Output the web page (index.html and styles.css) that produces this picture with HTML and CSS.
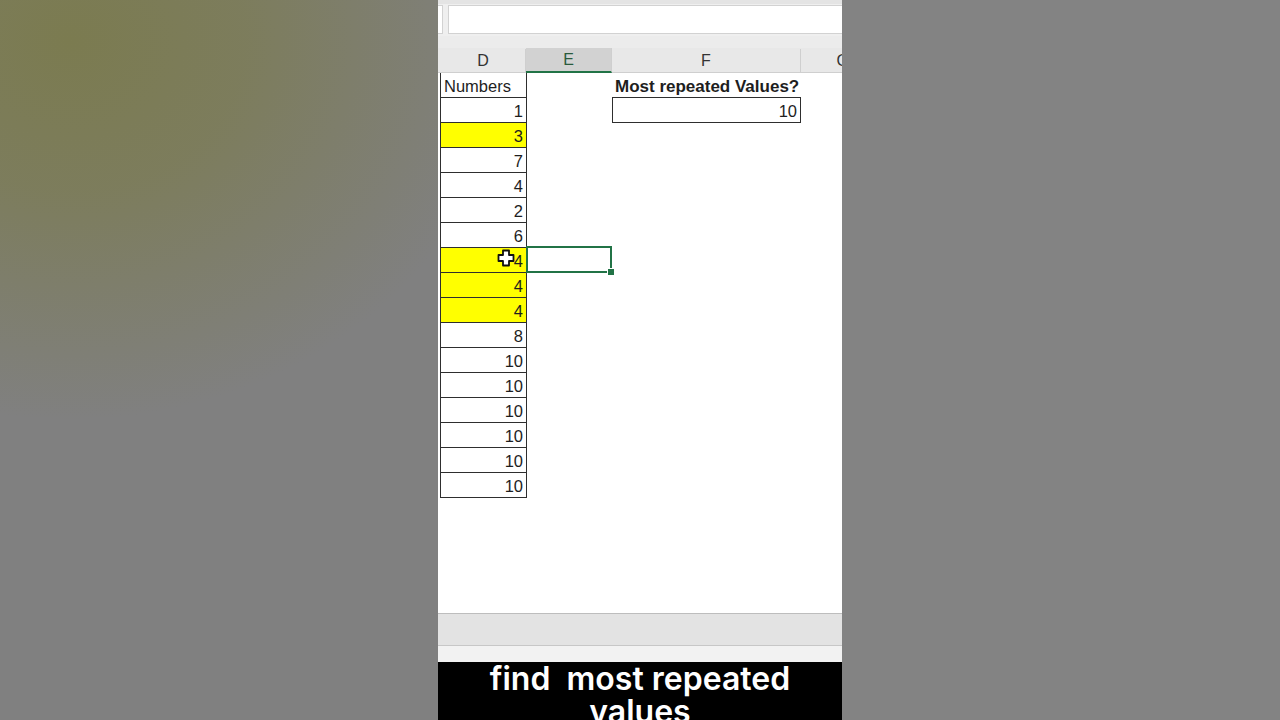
FILE: index.html
```html
<!DOCTYPE html>
<html>
<head>
<meta charset="utf-8">
<link rel="stylesheet" href="styles.css">
</head>
<body>
<div class="side-left"></div>
<main class="center">
  <div class="topstrip"></div>
  <div class="formula-row">
    <div class="namebox"></div>
    <div class="fx-input"></div>
  </div>
  <div class="ribbon-gap"></div>
  <div class="col-headers">
    <div class="rh"></div>
    <div class="ch">D</div>
    <div class="ch sel">E</div>
    <div class="ch">F</div>
    <div class="ch last">G</div>
  </div>
  <div class="sheet">
    <div class="grid">
      <div class="edge"></div><div class="d head">Numbers</div><div class="e"></div><div class="f title">Most repeated Values?</div><div class="g"></div>
      <div class="edge"></div><div class="d">1</div><div class="e"></div><div class="f boxed">10</div><div class="g"></div>
      <div class="edge"></div><div class="d hl">3</div><div class="e"></div><div class="f"></div><div class="g"></div>
      <div class="edge"></div><div class="d">7</div><div class="e"></div><div class="f"></div><div class="g"></div>
      <div class="edge"></div><div class="d">4</div><div class="e"></div><div class="f"></div><div class="g"></div>
      <div class="edge"></div><div class="d">2</div><div class="e"></div><div class="f"></div><div class="g"></div>
      <div class="edge"></div><div class="d">6</div><div class="e"></div><div class="f"></div><div class="g"></div>
      <div class="edge"></div><div class="d hl cursor-cell">4<svg class="cursor" width="18" height="18" viewBox="0 0 18 18"><path d="M6 1.5h6v4.5h4.5v6h-4.5v4.5h-6v-4.5h-4.5v-6h4.5z" fill="#fff" stroke="#111" stroke-width="1.8" stroke-linejoin="round"/></svg></div><div class="e active"><span class="handle"></span></div><div class="f"></div><div class="g"></div>
      <div class="edge"></div><div class="d hl">4</div><div class="e"></div><div class="f"></div><div class="g"></div>
      <div class="edge"></div><div class="d hl">4</div><div class="e"></div><div class="f"></div><div class="g"></div>
      <div class="edge"></div><div class="d">8</div><div class="e"></div><div class="f"></div><div class="g"></div>
      <div class="edge"></div><div class="d">10</div><div class="e"></div><div class="f"></div><div class="g"></div>
      <div class="edge"></div><div class="d">10</div><div class="e"></div><div class="f"></div><div class="g"></div>
      <div class="edge"></div><div class="d">10</div><div class="e"></div><div class="f"></div><div class="g"></div>
      <div class="edge"></div><div class="d">10</div><div class="e"></div><div class="f"></div><div class="g"></div>
      <div class="edge"></div><div class="d">10</div><div class="e"></div><div class="f"></div><div class="g"></div>
      <div class="edge"></div><div class="d">10</div><div class="e"></div><div class="f"></div><div class="g"></div>
    </div>
  </div>
  <div class="tabbar"></div>
  <div class="statusbar"></div>
  <div class="caption">find  most repeated
values</div>
</main>
<div class="side-right"></div>
</body>
</html>
```
FILE: styles.css
```css
html, body {
  margin: 0;
  padding: 0;
}
body {
  width: 1280px;
  height: 720px;
  overflow: hidden;
  display: flex;
  font-family: "Liberation Sans", Arial, sans-serif;
}
.side-left {
  width: 438px;
  flex: none;
  background:
    radial-gradient(ellipse 440px 380px at 70px 40px, rgba(123,123,80,1) 0%, rgba(124,124,86,0.85) 40%, rgba(128,128,128,0) 100%),
    #808080;
}
.side-right {
  flex: 1;
  background: #838383;
}
.center {
  width: 404px;
  flex: none;
  display: flex;
  flex-direction: column;
  background: #fff;
  overflow: hidden;
}
.topstrip {
  height: 4px;
  background: #e4e4e4;
  flex: none;
}
.formula-row {
  height: 32px;
  flex: none;
  display: flex;
  gap: 5px;
  background: #efefef;
  box-sizing: border-box;
  padding: 1px 0 2px 0;
}
.namebox {
  width: 4px;
  background: #fff;
  border: 1px solid #d2d2d2;
  border-left: none;
}
.fx-input {
  flex: 1;
  background: #fff;
  border: 1px solid #d2d2d2;
  border-right: none;
}
.ribbon-gap {
  height: 12px;
  flex: none;
  background: #ececec;
}
.col-headers {
  height: 25px;
  flex: none;
  display: grid;
  grid-template-columns: 3px 85px 86px 189px 1fr;
  background: #e8e8e8;
  border-bottom: 1px solid #cfcfcf;
  box-sizing: border-box;
  color: #333;
  font-size: 16px;
  padding-top: 1px;
}
.rh {
  background: #e8e8e8;
}
.ch {
  display: flex;
  align-items: center;
  justify-content: center;
  border-right: 1px solid #cfcfcf;
}
.ch.sel {
  background: #d2d2d2;
  border-bottom: 2px solid #217346;
  color: #2a5a3c;
  margin-bottom: -1px;
  margin-top: -1px;
}
.ch.last {
  border-right: none;
  justify-content: flex-end;
  overflow: hidden;
  margin-right: -7px;
}
.sheet {
  flex: 1;
  background: #fff;
}
.grid {
  display: grid;
  grid-template-columns: 3px 85px 86px 189px 1fr;
  grid-auto-rows: 25px;
  color: #1e1e1e;
  font-size: 16.5px;
}
.grid > div {
  box-sizing: border-box;
  display: flex;
  align-items: center;
  padding-top: 2px;
}
.d {
  justify-content: flex-end;
  padding-right: 3px;
  border-left: 1px solid #2e2e2e;
  border-right: 1px solid #2e2e2e;
  border-bottom: 1px solid #2e2e2e;
  margin-left: -1px;
  margin-right: -1px;
  position: relative;
}
.d.head {
  justify-content: flex-start;
  padding-left: 3px;
}
.d.hl {
  background: #ffff00;
}
.title {
  font-weight: bold;
  font-size: 17px;
  padding-left: 3px;
  white-space: nowrap;
}
.f.boxed {
  justify-content: flex-end;
  padding-right: 3px;
  border: 1px solid #2e2e2e;
  margin-top: -1px;
  height: 26px;
}
.e.active {
  position: relative;
  border: 2px solid #217346;
  margin-top: -2px;
  height: 27px;
}
.handle {
  position: absolute;
  right: -5px;
  bottom: -5px;
  width: 6px;
  height: 6px;
  background: #217346;
  border: 1px solid #fff;
}
.cursor {
  position: absolute;
  left: 56px;
  top: 1px;
}
.tabbar {
  height: 33px;
  flex: none;
  background: #e3e3e3;
  border-top: 1px solid #bdbdbd;
  border-bottom: 1px solid #c7c7c7;
  box-sizing: border-box;
}
.statusbar {
  height: 16px;
  flex: none;
  background: #f2f2f2;
}
.caption {
  height: 58px;
  flex: none;
  background: #000;
  color: #fff;
  font-family: Inter, "Open Sans", sans-serif;
  font-weight: 600;
  font-size: 32px;
  line-height: 33px;
  text-align: center;
  white-space: pre;
  overflow: hidden;
  box-sizing: border-box;
}
```
